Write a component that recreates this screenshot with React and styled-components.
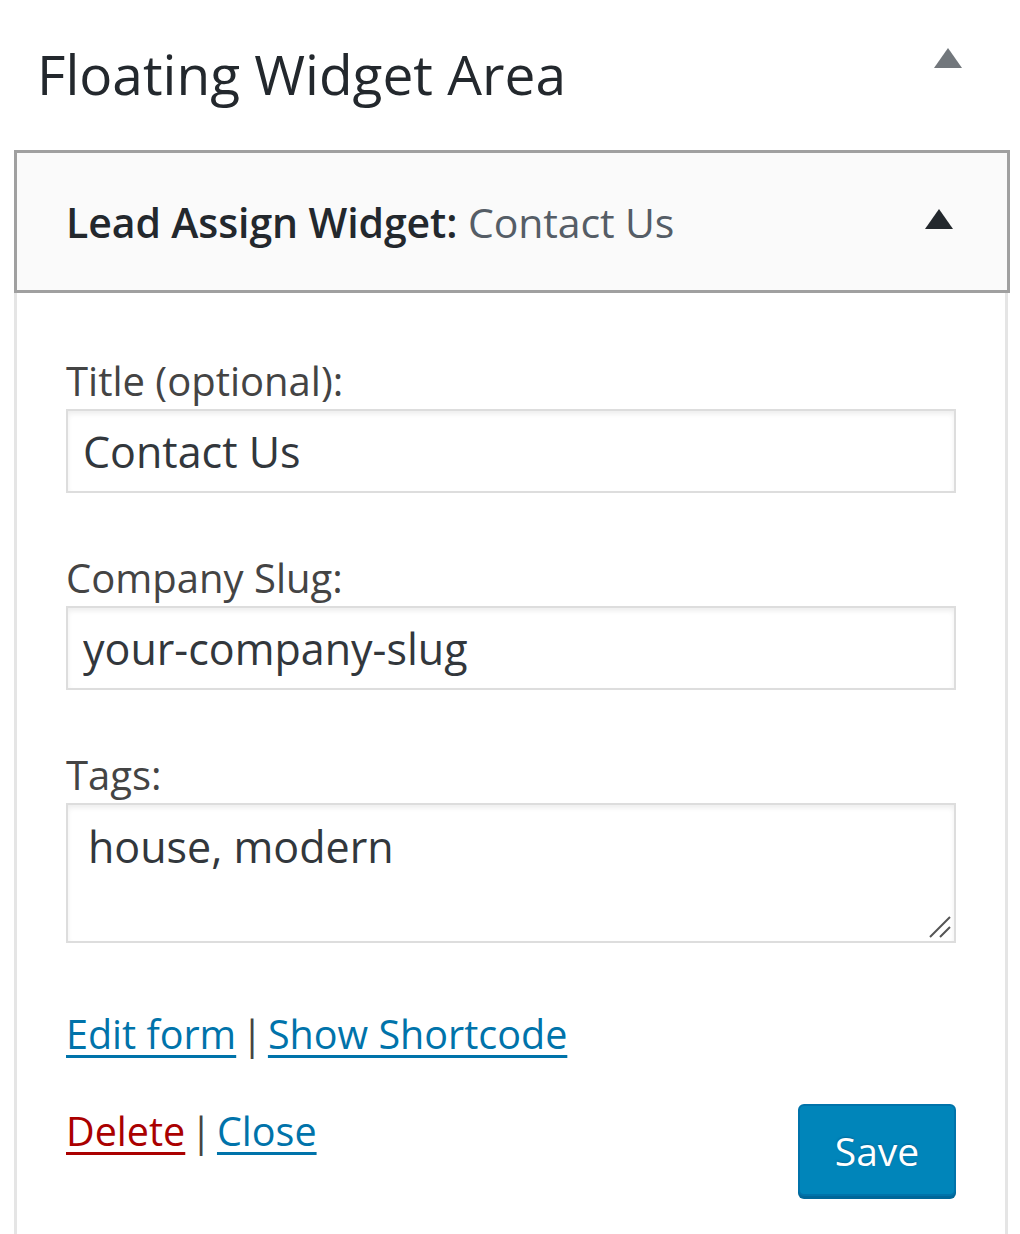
import React from "react";
import styled, { createGlobalStyle } from "styled-components";

const GlobalStyle = createGlobalStyle`
  body {
    margin: 0;
    background: #fff;
    font-family: "Open Sans", "Noto Sans", sans-serif;
    color: #23282d;
  }
`;

const Page = styled.div`
  width: 1020px;
  height: 1234px;
  overflow: hidden;
`;

const AreaHeader = styled.div`
  display: flex;
  justify-content: space-between;
  align-items: flex-start;
  padding: 36px 58px 0 37px;
  height: 110px;
  box-sizing: border-box;
`;

const AreaTitle = styled.h2`
  margin: 0;
  font-size: 55px;
  font-weight: 400;
  line-height: 76px;
  color: #23282d;
`;

const Arrow = styled.span`
  display: block;
  width: 0;
  height: 0;
  margin-top: ${(p) => p.$top}px;
  border-left: 14px solid transparent;
  border-right: 14px solid transparent;
  border-bottom: 20px solid ${(p) => p.$color};
`;

const Widget = styled.div`
  margin: 40px 10px 0 14px;
`;

const WidgetTop = styled.div`
  display: flex;
  justify-content: space-between;
  align-items: center;
  height: 143px;
  box-sizing: border-box;
  padding: 0 54px 0 49px;
  background: #fafafa;
  border: 3px solid #a0a0a0;
`;

const WidgetTitle = styled.h3`
  margin: 0;
  font-size: 41px;
  font-weight: 600;
  letter-spacing: -0.1px;
  color: #23282d;
`;

const InTitle = styled.span`
  font-weight: 400;
  color: #555d66;
`;

const WidgetInside = styled.div`
  border-left: 3px solid #e5e5e5;
  border-right: 3px solid #e5e5e5;
  margin-right: 2px;
  padding: 64px 49px 40px 49px;
  min-height: 940px;
`;

const Field = styled.div`
  display: flex;
  flex-direction: column;
  margin-bottom: ${(p) => p.$gap || 61}px;
`;

const Label = styled.label`
  font-size: 40px;
  line-height: 48px;
  color: #444;
  margin-bottom: 4px;
`;

const TextInput = styled.input`
  height: 84px;
  box-sizing: border-box;
  border: 2px solid #ddd;
  box-shadow: inset 0 3px 5px rgba(0, 0, 0, 0.07);
  padding: 0 15px;
  font-family: inherit;
  font-size: 43px;
  color: #32373c;
  background: #fff;
  outline: none;
`;

const AreaWrap = styled.div`
  position: relative;
  display: flex;
`;

const TextArea = styled.textarea`
  flex: 1;
  height: 140px;
  box-sizing: border-box;
  border: 2px solid #ddd;
  box-shadow: inset 0 3px 5px rgba(0, 0, 0, 0.07);
  padding: 6px 20px;
  font-family: inherit;
  font-size: 43px;
  line-height: 72px;
  color: #32373c;
  background: #fff;
  outline: none;
  resize: none;
`;

const Grip = styled.svg`
  position: absolute;
  right: 4px;
  bottom: 4px;
  width: 26px;
  height: 26px;
  pointer-events: none;
`;

const LinkRow = styled.div`
  font-size: 39.5px;
  line-height: 50px;
  color: #444;
`;

const ActionLink = styled.a`
  color: ${(p) => (p.$danger ? "#a00" : "#0073aa")};
  text-decoration: underline;
  text-underline-offset: 6px;
  text-decoration-thickness: 3px;
`;

const Sep = styled.span`
  margin: 0 5px;
`;

const Controls = styled.div`
  display: flex;
  justify-content: space-between;
  align-items: flex-start;
  margin-top: 47px;
`;

const SaveButton = styled.button`
  width: 158px;
  height: 92px;
  margin-top: -2px;
  background: #0085ba;
  border: 2px solid #0073aa;
  border-radius: 6px;
  box-shadow: 0 3px 0 #006799;
  color: #fff;
  font-family: inherit;
  font-size: 39px;
  text-shadow: 0 -1px 2px #006799;
`;

export default function App() {
  return (
    <Page>
      <GlobalStyle />
      <AreaHeader>
        <AreaTitle>Floating Widget Area</AreaTitle>
        <Arrow $color="#72777c" $top={12} />
      </AreaHeader>
      <Widget>
        <WidgetTop>
          <WidgetTitle>
            Lead Assign Widget: <InTitle>Contact Us</InTitle>
          </WidgetTitle>
          <Arrow $color="#23282d" $top={-6} />
        </WidgetTop>
        <WidgetInside>
          <Field>
            <Label>Title (optional):</Label>
            <TextInput defaultValue="Contact Us" />
          </Field>
          <Field>
            <Label>Company Slug:</Label>
            <TextInput defaultValue="your-company-slug" />
          </Field>
          <Field $gap={66}>
            <Label>Tags:</Label>
            <AreaWrap>
              <TextArea defaultValue="house, modern" />
              <Grip viewBox="0 0 26 26">
                <path d="M24 4 L4 24 M24 14 L14 24" stroke="#555" strokeWidth="2" />
              </Grip>
            </AreaWrap>
          </Field>
          <LinkRow>
            <ActionLink href="#">Edit form</ActionLink>
            <Sep>|</Sep>
            <ActionLink href="#">Show Shortcode</ActionLink>
          </LinkRow>
          <Controls>
            <LinkRow>
              <ActionLink href="#" $danger>
                Delete
              </ActionLink>
              <Sep>|</Sep>
              <ActionLink href="#">Close</ActionLink>
            </LinkRow>
            <SaveButton>Save</SaveButton>
          </Controls>
        </WidgetInside>
      </Widget>
    </Page>
  );
}
